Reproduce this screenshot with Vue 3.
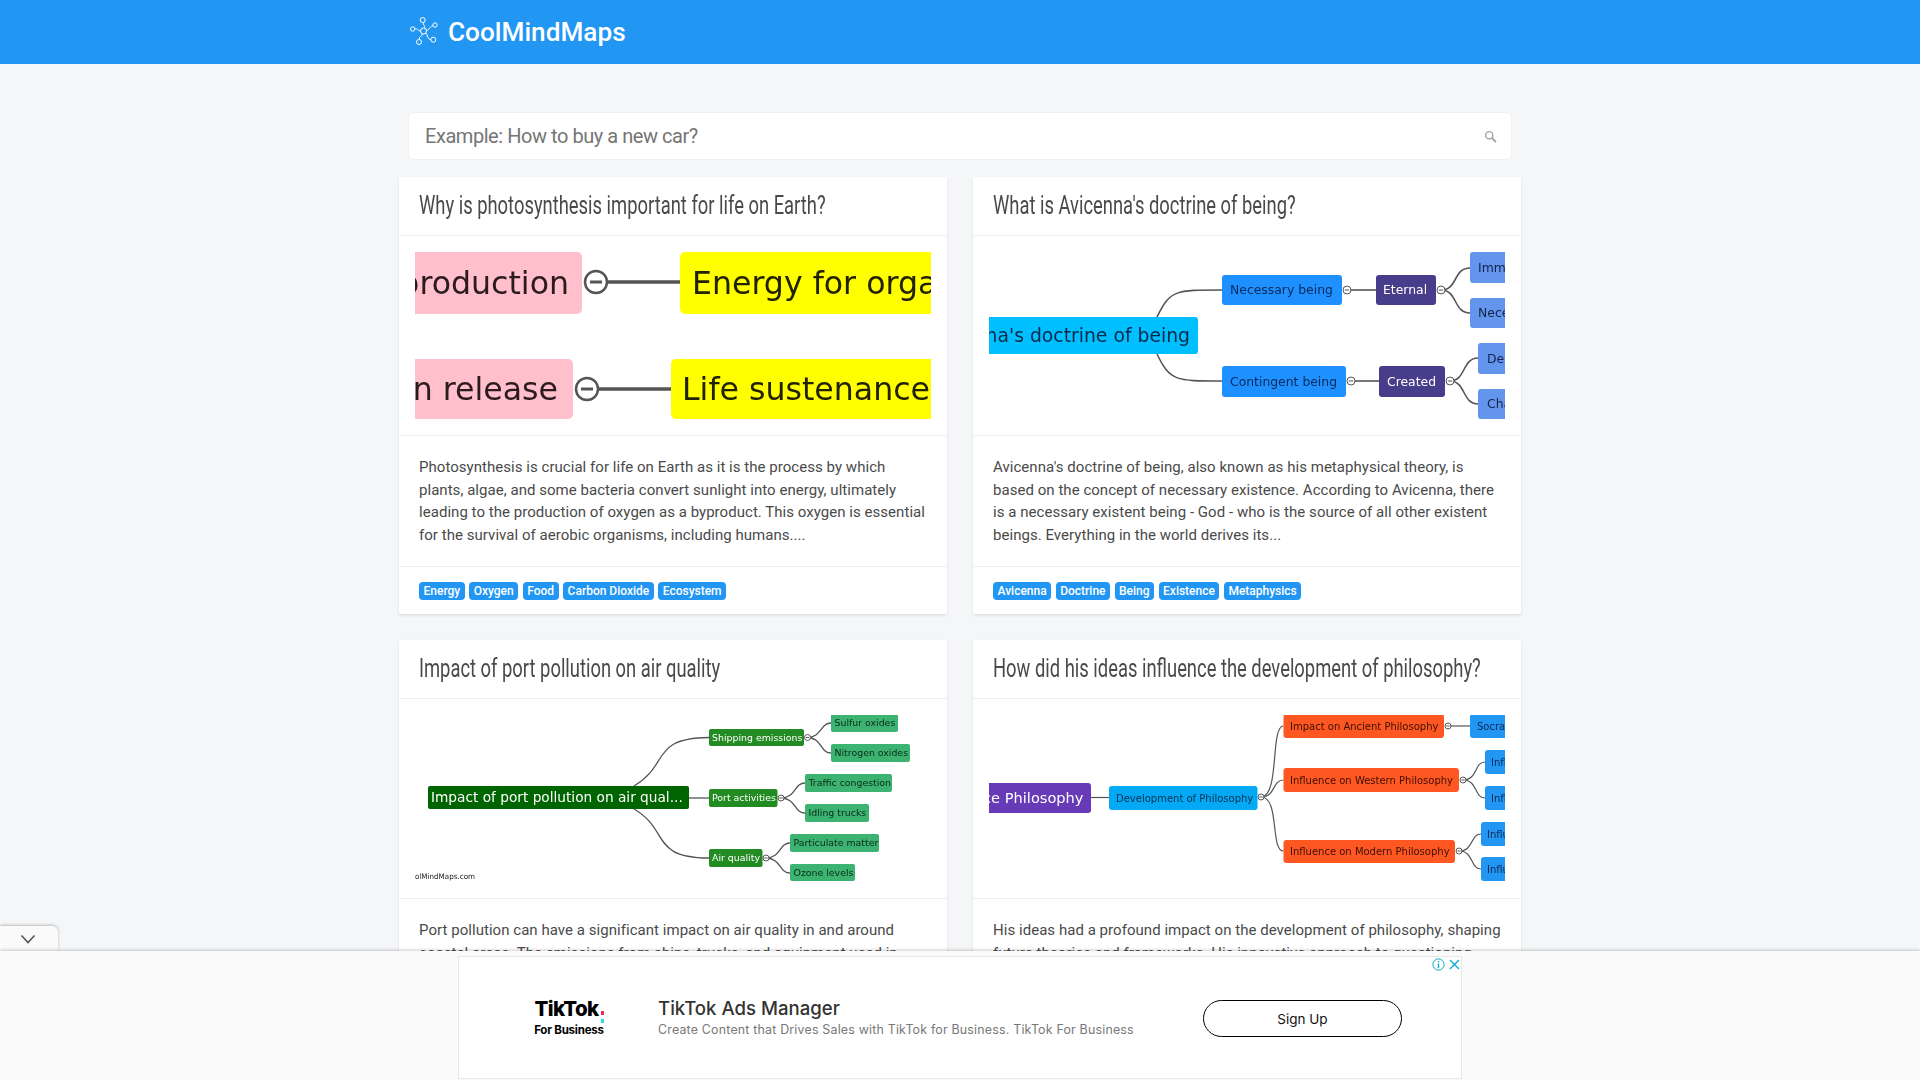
<script setup>
const line = '#555'

// boxes: [x1, y1, x2, y2, fill, label, textX, fontSize, textColor, anchor]
const cards = [
  {
    title: 'Why is photosynthesis important for life on Earth?',
    text: 'Photosynthesis is crucial for life on Earth as it is the process by which plants, algae, and some bacteria convert sunlight into energy, ultimately leading to the production of oxygen as a byproduct. This oxygen is essential for the survival of aerobic organisms, including humans....',
    tags: ['Energy', 'Oxygen', 'Food', 'Carbon Dioxide', 'Ecosystem'],
    map: {
      view: '415 252 516 167',
      width: 3.6,
      rx: 5,
      soft: true,
      boxes: [
        [395, 252, 582, 314, '#ffc0cb', 'Oxygen production', 569, 31.6, '#2b1a1e', 'end'],
        [680, 252, 950, 314, '#ffff00', 'Energy for organisms', 692, 31.6, '#222200'],
        [395, 359, 573, 419, '#ffc0cb', 'Oxygen release', 558, 31.6, '#2b1a1e', 'end'],
        [671, 359, 950, 419, '#ffff00', 'Life sustenance', 682, 31.6, '#222200']
      ],
      paths: ['M596 282H680', 'M587 389H671'],
      dots: [[596, 282, 11], [587, 389, 11]]
    }
  },
  {
    title: "What is Avicenna's doctrine of being?",
    text: "Avicenna's doctrine of being, also known as his metaphysical theory, is based on the concept of necessary existence. According to Avicenna, there is a necessary existent being - God - who is the source of all other existent beings. Everything in the world derives its...",
    tags: ['Avicenna', 'Doctrine', 'Being', 'Existence', 'Metaphysics'],
    map: {
      view: '989 252 516 167',
      width: 1.6,
      rx: 3,
      boxes: [
        [970, 317, 1198, 354, '#00bfff', "Avicenna's doctrine of being", 1190, 18.8, '#0b2a4a', 'end'],
        [1222, 275, 1342, 305, '#1e90ff', 'Necessary being', 1230, 12.4, '#0b2a5a'],
        [1376, 275, 1436, 305, '#483d8b', 'Eternal', 1383, 12.4, '#fff'],
        [1470, 252, 1530, 283, '#6495ed', 'Immutable', 1478, 12.4, '#14234a'],
        [1470, 298, 1530, 328, '#6495ed', 'Necessary', 1478, 12.4, '#14234a'],
        [1222, 366, 1346, 397, '#1e90ff', 'Contingent being', 1230, 12.4, '#0b2a5a'],
        [1379, 366, 1445, 397, '#483d8b', 'Created', 1387, 12.4, '#fff'],
        [1478, 343, 1530, 374, '#6495ed', 'Dependent', 1487, 12.4, '#14234a'],
        [1478, 389, 1530, 419, '#6495ed', 'Changing', 1487, 12.4, '#14234a']
      ],
      paths: [
        'M1157 317C1170 290 1175 290 1222 290',
        'M1157 354C1170 381 1175 381 1222 381',
        'M1347 290H1376',
        'M1351 381H1379',
        'M1441 290C1458 290 1453 268 1470 268',
        'M1441 290C1458 290 1453 313 1470 313',
        'M1450 381C1466 381 1462 358 1478 358',
        'M1450 381C1466 381 1462 404 1478 404'
      ],
      dots: [[1347, 290, 4], [1441, 290, 4], [1351, 381, 4], [1450, 381, 4]]
    }
  },
  {
    title: 'Impact of port pollution on air quality',
    text: 'Port pollution can have a significant impact on air quality in and around coastal areas. The emissions from ships, trucks, and equipment used in',
    tags: [],
    map: {
      view: '415 715 516 167',
      width: 1.3,
      rx: 2,
      boxes: [
        [428, 786, 689, 809, '#006400', 'Impact of port pollution on air qual...', 431, 13.7, '#fff'],
        [709, 729, 804, 746, '#228b22', 'Shipping emissions', 712, 9.4, '#fff'],
        [831, 714, 898, 732, '#3cb371', 'Sulfur oxides', 834.5, 9.4, '#0c2a18'],
        [831, 744, 910, 762, '#3cb371', 'Nitrogen oxides', 834.5, 9.4, '#0c2a18'],
        [709, 789, 777.5, 807, '#228b22', 'Port activities', 712, 9.4, '#fff'],
        [805, 774, 892, 792, '#3cb371', 'Traffic congestion', 808.5, 9.4, '#0c2a18'],
        [805, 804, 869, 822, '#3cb371', 'Idling trucks', 808.5, 9.4, '#0c2a18'],
        [709, 849, 762.5, 867, '#228b22', 'Air quality', 712, 9.4, '#fff'],
        [790, 834, 879, 852, '#3cb371', 'Particulate matter', 793.5, 9.4, '#0c2a18'],
        [790, 864, 855, 881, '#3cb371', 'Ozone levels', 793.5, 9.4, '#0c2a18']
      ],
      paths: [
        'M634 786C670 765 650 738 709 737.5',
        'M689 798H709',
        'M634 809C670 830 650 858 709 858',
        'M807 737.5C822 737.5 820 723 831 723',
        'M807 737.5C822 737.5 820 753 831 753',
        'M781 798C796 798 794 783 805 783',
        'M781 798C796 798 794 813 805 813',
        'M766 858C781 858 779 843 790 843',
        'M766 858C781 858 779 873 790 873'
      ],
      dots: [[807.5, 737.5, 3], [781, 798, 3], [766, 858, 3]],
      note: true
    }
  },
  {
    title: 'How did his ideas influence the development of philosophy?',
    text: 'His ideas had a profound impact on the development of philosophy, shaping future theories and frameworks. His innovative approach to questioning',
    tags: [],
    map: {
      view: '989 715 516 167',
      width: 1.2,
      rx: 3,
      boxes: [
        [960, 783, 1091, 813, '#673ab7', 'Influence Philosophy', 1083.5, 14.6, '#fff', 'end'],
        [1109, 786, 1257.5, 810, '#03a9f4', 'Development of Philosophy', 1116, 10, '#0a3050'],
        [1283.5, 714, 1444, 738, '#ff5722', 'Impact on Ancient Philosophy', 1290, 10, '#3a1006'],
        [1470, 714, 1530, 738, '#2196f3', 'Socrates', 1477, 10, '#0b2a5a'],
        [1283.5, 768, 1459, 792, '#ff5722', 'Influence on Western Philosophy', 1290, 10, '#3a1006'],
        [1485, 750, 1530, 774, '#2196f3', 'Influence', 1491, 10, '#0b2a5a'],
        [1485, 786, 1530, 810, '#2196f3', 'Influence', 1491, 10, '#0b2a5a'],
        [1283.5, 840, 1455, 863, '#ff5722', 'Influence on Modern Philosophy', 1290, 10, '#3a1006'],
        [1481, 822, 1530, 846, '#2196f3', 'Influence', 1487, 10, '#0b2a5a'],
        [1481, 857, 1530, 881, '#2196f3', 'Influence', 1487, 10, '#0b2a5a']
      ],
      paths: [
        'M1091 797.5H1109',
        'M1261 797C1280 797 1270 726 1283.5 726',
        'M1261 797C1276 797 1272 780 1283.5 780',
        'M1261 797C1280 797 1270 851 1283.5 851',
        'M1448 726H1470',
        'M1463 780C1478 780 1474 762 1485 762',
        'M1463 780C1478 780 1474 798 1485 798',
        'M1459 851C1474 851 1470 834 1481 834',
        'M1459 851C1474 851 1470 869 1481 869'
      ],
      dots: [[1261, 797, 3], [1448, 726, 3], [1463, 780, 3], [1459, 851, 3]]
    }
  }
]
</script>

<template>
  <nav class="navbar">
    <div class="brand">
      <svg class="logo" width="30" height="30" viewBox="0 0 30 30" fill="none" stroke="#fff" stroke-width="1">
        <circle cx="14.5" cy="14" r="3" />
        <circle cx="13.7" cy="3" r="2.5" />
        <circle cx="26" cy="8" r="2.2" />
        <circle cx="3.7" cy="12" r="2.2" />
        <circle cx="10" cy="25" r="2.5" />
        <circle cx="24.3" cy="22.7" r="2.5" />
        <path d="M15.4 5.4C12 7.5 17.5 8.5 15 11M24 9C21.5 8 20.5 13.5 17.4 13.2M5.9 12C8 10.5 9 14.5 11.6 13.8M10.4 22.5C9.5 19 13.5 19.5 13.6 16.9M21.9 22.4C19 23.5 18.5 17.5 16.7 16" />
      </svg>
      <span class="brand-name">CoolMindMaps</span>
    </div>
  </nav>

  <main class="page">
    <div class="search">
      <span class="search-text">Example: How to buy a new car?</span>
      <svg width="13" height="13" viewBox="0 0 13 13" fill="none" stroke="#a3a3a3" stroke-width="1.4">
        <circle cx="5.2" cy="5.2" r="3.6" />
        <path d="M8 8l4 4" stroke-width="1.8" />
      </svg>
    </div>

    <div class="grid">
      <article v-for="card in cards" :key="card.title" class="card">
        <header class="card-title"><span class="title-text">{{ card.title }}</span></header>
        <div class="card-image">
          <svg class="map" :class="{ soft: card.map.soft }" width="516" height="167" :viewBox="card.map.view">
            <path v-for="d in card.map.paths" :key="d" :d="d" fill="none" :stroke="line" :stroke-width="card.map.width" />
            <g v-for="(b, i) in card.map.boxes" :key="i">
              <rect :x="b[0]" :y="b[1]" :width="b[2] - b[0]" :height="b[3] - b[1]" :rx="card.map.rx" :fill="b[4]" />
              <text :x="b[6]" :y="(b[1] + b[3]) / 2 + b[7] * 0.35" :font-size="b[7]" :fill="b[8]" :text-anchor="b[9] || 'start'">{{ b[5] }}</text>
            </g>
            <g v-for="(c, i) in card.map.dots" :key="i">
              <circle :cx="c[0]" :cy="c[1]" :r="c[2]" fill="#fff" :stroke="line" :stroke-width="c[2] > 5 ? 2.5 : 1" />
              <path :d="`M${c[0] - c[2] * 0.55} ${c[1]}H${c[0] + c[2] * 0.55}`" :stroke="line" :stroke-width="c[2] > 5 ? 3 : 1" />
            </g>
            <text v-if="card.map.note" x="415" y="879" font-size="7.6" fill="#222" textLength="60" lengthAdjust="spacingAndGlyphs">olMindMaps.com</text>
          </svg>
        </div>
        <p class="card-text">{{ card.text }}</p>
        <footer v-if="card.tags.length" class="card-tags">
          <span v-for="tag in card.tags" :key="tag" class="tag">{{ tag }}</span>
        </footer>
      </article>
    </div>
  </main>

  <div class="ad-tab">
    <svg width="16" height="10" viewBox="0 0 16 10" fill="none" stroke="#555" stroke-width="1.6">
      <path d="M1.5 1.5L8 8.5L14.5 1.5" />
    </svg>
  </div>
  <aside class="ad-bar">
    <div class="ad">
      <div class="ad-logo">
        <div class="ad-logo-top">TikTok<span class="colon"><i class="red"></i><i class="teal"></i></span></div>
        <div class="ad-logo-sub">For Business</div>
      </div>
      <div class="ad-copy">
        <div class="ad-title">TikTok Ads Manager</div>
        <div class="ad-sub">Create Content that Drives Sales with TikTok for Business. TikTok For Business</div>
      </div>
      <div class="ad-button">Sign Up</div>
      <div class="ad-marks">
        <svg width="13" height="13" viewBox="0 0 13 13" fill="none" stroke="#00aecd" stroke-width="1">
          <circle cx="6.5" cy="6.5" r="5.6" />
          <path d="M6.5 5.5V10M6.5 3v1.3" stroke-width="1.4" />
        </svg>
        <svg width="11" height="11" viewBox="0 0 11 11" fill="none" stroke="#00aecd" stroke-width="1.3">
          <path d="M1 1L10 10M10 1L1 10" />
        </svg>
      </div>
    </div>
  </aside>
</template>

<style>
html, body {
  margin: 0;
  height: 100%;
  overflow: hidden;
  background: #f5f6f8;
}
</style>

<style scoped>
.navbar {
  height: 64px;
  background: #2196f3;
  display: flex;
  justify-content: center;
}

.brand {
  width: 1102px;
  display: flex;
  align-items: center;
  color: #fff;
}

.logo {
  flex: none;
  margin-right: 9px;
}

.brand-name {
  font-family: Roboto, sans-serif;
  font-weight: 500;
  font-size: 26.2px;
}

.page {
  width: 1122px;
  margin: 0 auto;
  padding-top: 49px;
  font-family: Roboto, sans-serif;
  color: #4a4a4a;
}

.search {
  height: 46px;
  margin: 0 10px 18px;
  padding: 0 14px 0 16px;
  box-sizing: border-box;
  background: #fff;
  border-radius: 4px;
  box-shadow: 0 0 2px rgba(0, 0, 0, 0.08);
  display: flex;
  align-items: center;
  justify-content: space-between;
}

.search-text {
  font-size: 20px;
  letter-spacing: -0.45px;
  color: #757575;
  margin-top: -1px;
}

.grid {
  display: grid;
  grid-template-columns: minmax(0, 1fr) minmax(0, 1fr);
  gap: 26px;
}

.card {
  background: #fff;
  box-shadow: 0 2px 3px rgba(10, 10, 10, 0.08), 0 0 1px rgba(10, 10, 10, 0.08);
  border-radius: 2px;
}

.card-title {
  height: 58px;
  padding: 0 20px;
  border-bottom: 1px solid #ededed;
  font-size: 25px;
  line-height: 58px;
  color: #4a4a4a;
  white-space: nowrap;
}

/* the site's condensed heading face isn't installed, so squeeze Roboto */
.title-text {
  display: inline-block;
  transform: scaleX(0.735);
  transform-origin: left center;
}

.card-image {
  padding: 16px;
  border-bottom: 1px solid #ededed;
  height: 167px;
}

.map {
  display: block;
  font-family: "DejaVu Sans", sans-serif;
  filter: blur(0.3px);
}

.map.soft {
  filter: blur(0.6px);
}

.card-text {
  margin: 0;
  padding: 20px 14px 20px 20px;
  font-size: 15px;
  line-height: 22.5px;
  letter-spacing: 0.04px;
}

.card-tags {
  border-top: 1px solid #ededed;
  padding: 15px 20px 14px;
  display: flex;
  gap: 4.5px;
}

.tag {
  height: 18px;
  padding: 0 4.5px;
  background: #2196f3;
  color: #fff;
  border-radius: 4px;
  font-size: 12px;
  font-weight: 500;
  line-height: 18px;
}

.ad-tab {
  position: fixed;
  left: 0;
  bottom: 129px;
  width: 58px;
  height: 25px;
  background: #fafafa;
  border-radius: 0 6px 0 0;
  box-shadow: 0 -1px 3px rgba(0, 0, 0, 0.25);
  display: flex;
  align-items: center;
  justify-content: center;
  box-sizing: border-box;
  padding-right: 2px;
}

.ad-bar {
  position: fixed;
  left: 0;
  right: 0;
  bottom: 0;
  height: 129px;
  background: #fafafa;
  box-shadow: 0 -1px 3px rgba(0, 0, 0, 0.2);
  display: flex;
  justify-content: center;
  align-items: flex-end;
  padding-bottom: 1px;
  box-sizing: border-box;
}

.ad {
  position: relative;
  width: 1004px;
  height: 123px;
  box-sizing: border-box;
  background: #fff;
  border: 1px solid #e8e8e8;
  display: flex;
  align-items: center;
  font-family: Inter, sans-serif;
}

.ad-logo {
  width: 70px;
  margin-left: 75px;
  color: #000;
  text-align: center;
}

.ad-logo-top {
  font-weight: 800;
  font-size: 20.5px;
  line-height: 20px;
  letter-spacing: -0.6px;
  white-space: nowrap;
}

.colon {
  display: inline-flex;
  flex-direction: column;
  gap: 4px;
  margin-left: 2px;
  vertical-align: 1px;
}

.colon i {
  width: 3px;
  height: 4px;
}

.red {
  background: #f0294f;
}

.teal {
  background: #25e0dc;
}

.ad-logo-sub {
  font-weight: 700;
  font-size: 11.5px;
  line-height: 14px;
  letter-spacing: -0.2px;
  white-space: nowrap;
}

.ad-copy {
  margin-left: 54px;
  width: 546px;
}

.ad-title {
  font-size: 18.6px;
  font-weight: 500;
  color: #333;
  line-height: 24px;
}

.ad-sub {
  font-size: 12.4px;
  color: #777;
  line-height: 20px;
  letter-spacing: 0.2px;
  white-space: nowrap;
}

.ad-button {
  width: 199px;
  height: 37px;
  box-sizing: border-box;
  border: 1px solid #000;
  border-radius: 19px;
  font-size: 13.5px;
  color: #111;
  display: flex;
  align-items: center;
  justify-content: center;
  margin: 2px 0 0 -1px;
}

.ad-marks {
  position: absolute;
  top: 1px;
  right: 1px;
  display: flex;
  align-items: center;
  gap: 4px;
}
</style>
